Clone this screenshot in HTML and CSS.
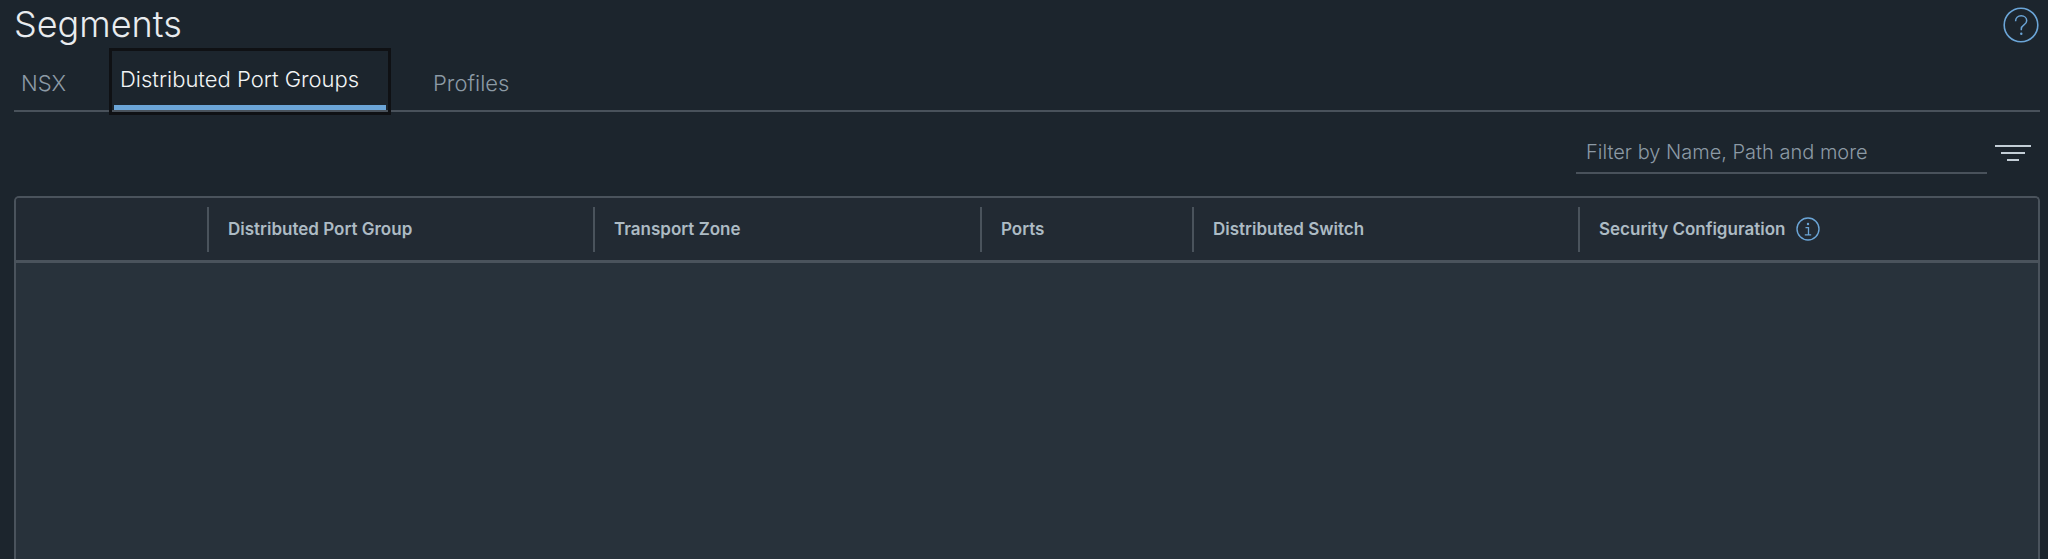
FILE: index.html
```html
<!DOCTYPE html>
<html lang="en">
<head>
<meta charset="utf-8">
<title>Segments</title>
<link rel="stylesheet" href="styles.css">
</head>
<body>
<main class="page">
  <header class="title-row">
    <h1 class="title">Segments</h1>
    <svg class="help" viewBox="0 0 36 36" width="36" height="36" aria-label="Help">
      <circle cx="18" cy="18" r="16.8" fill="none" stroke="#6ba5d7" stroke-width="1.6"/>
      <path d="M12.6 14.2c0-3.2 2.4-5.4 5.6-5.4 3.2 0 5.5 2.1 5.5 4.9 0 2.3-1.4 3.4-3 4.5-1.5 1-2.4 1.9-2.4 3.8v1.2" fill="none" stroke="#6ba5d7" stroke-width="1.5"/>
      <circle cx="18.3" cy="26.8" r="1.2" fill="#6ba5d7"/>
    </svg>
  </header>
  <nav class="tabs">
    <a class="tab tab-nsx">NSX</a>
    <a class="tab tab-active"><span class="tab-label">Distributed Port Groups</span></a>
    <a class="tab tab-profiles">Profiles</a>
  </nav>
  <div class="toolbar">
    <div class="filter-input">Filter by Name, Path and more</div>
    <svg class="filter-icon" viewBox="0 0 36 16" width="36" height="16" aria-label="Filter">
      <rect x="0" y="0" width="36" height="2" fill="#c3ced6"/>
      <rect x="6" y="7" width="24" height="2" fill="#c3ced6"/>
      <rect x="12" y="14" width="12" height="2" fill="#c3ced6"/>
    </svg>
  </div>
  <section class="grid">
    <div class="grid-head">
      <div class="col col-select"></div>
      <div class="col col-a"><span class="col-text">Distributed Port Group</span></div>
      <div class="col col-b"><span class="col-text">Transport Zone</span></div>
      <div class="col col-ports"><span class="col-text">Ports</span></div>
      <div class="col col-a"><span class="col-text">Distributed Switch</span></div>
      <div class="col col-last">
        <span class="col-text">Security Configuration</span>
        <svg class="info" viewBox="0 0 24 24" width="24" height="24" aria-label="Info">
          <circle cx="12" cy="12" r="11" fill="none" stroke="#6ba5d7" stroke-width="1.4"/>
          <circle cx="12" cy="7" r="1.2" fill="#6ba5d7"/>
          <path d="M9.5 10.6h3v7M8.8 17.8h6.4" fill="none" stroke="#6ba5d7" stroke-width="1.3"/>
        </svg>
      </div>
    </div>
    <div class="grid-body"></div>
  </section>
</main>
</body>
</html>
```

FILE: styles.css
```css
* { box-sizing: border-box; }
html, body { margin: 0; height: 100%; }
body {
  background: #1c252d;
  font-family: "Inter", "Liberation Sans", sans-serif;
  overflow: hidden;
}
.page {
  height: 559px;
  padding: 0 8px 0 14px;
  display: flex;
  flex-direction: column;
}
.title-row {
  height: 48px;
  display: flex;
  justify-content: space-between;
  align-items: flex-start;
}
.title {
  margin: 0;
  font-weight: 300;
  font-size: 36px;
  line-height: 48px;
  color: #e9ecef;
}
.help { margin: 7px 1px 0 0; }
.tabs {
  height: 64px;
  border-bottom: 2px solid #49525b;
  display: flex;
  align-items: stretch;
  font-size: 22px;
  font-weight: 300;
  white-space: nowrap;
}
.tab {
  display: flex;
  align-items: center;
  color: #8c9aa5;
  padding-top: 8px;
}
.tab-nsx { margin-left: 7px; }
.tab-active {
  flex: none;
  margin-left: 43px;
  width: 282px;
  height: 67px;
  border: 3px solid #0f1114;
  padding: 0 2px;
  color: #f2f4f5;
}
.tab-label {
  width: 100%;
  height: 100%;
  padding: 4px 0 0 6px;
  display: flex;
  align-items: center;
  border-bottom: 5px solid #6ba5d7;
  margin-bottom: 4px;
}
.tab-profiles { margin-left: 42px; }
.toolbar {
  height: 84px;
  display: flex;
  align-items: flex-start;
  justify-content: flex-end;
}
.filter-input {
  width: 411px;
  height: 48px;
  margin: 14px 8px 0 0;
  padding: 5px 0 0 10px;
  border-bottom: 2px solid #49525b;
  display: flex;
  align-items: center;
  color: #8c9aa5;
  font-size: 20px;
  font-weight: 300;
}
.filter-icon { margin: 33px 9px 0 0; }
.grid {
  flex: 1;
  border: 2px solid #4a535c;
  border-bottom: 0;
  border-radius: 5px 5px 0 0;
  display: flex;
  flex-direction: column;
  background: #28323b;
}
.grid-head {
  height: 65px;
  background: #222a33;
  border-bottom: 3px solid #4a535c;
  display: flex;
  align-items: center;
  border-radius: 3px 3px 0 0;
}
.col {
  flex: none;
  height: 45px;
  display: flex;
  align-items: center;
  border-left: 2px solid #4a535c;
  padding-left: 19px;
  color: #adbbc4;
  font-size: 17px;
  font-weight: 600;
}
.col-select { width: 191px; border-left: 0; }
.col-a { width: 386px; }
.col-b { width: 387px; }
.col-ports { width: 212px; }
.col-last { flex: 1; }
.col-text { display: block; }
.info { margin-left: 11px; }
.grid-body { flex: 1; }
```
